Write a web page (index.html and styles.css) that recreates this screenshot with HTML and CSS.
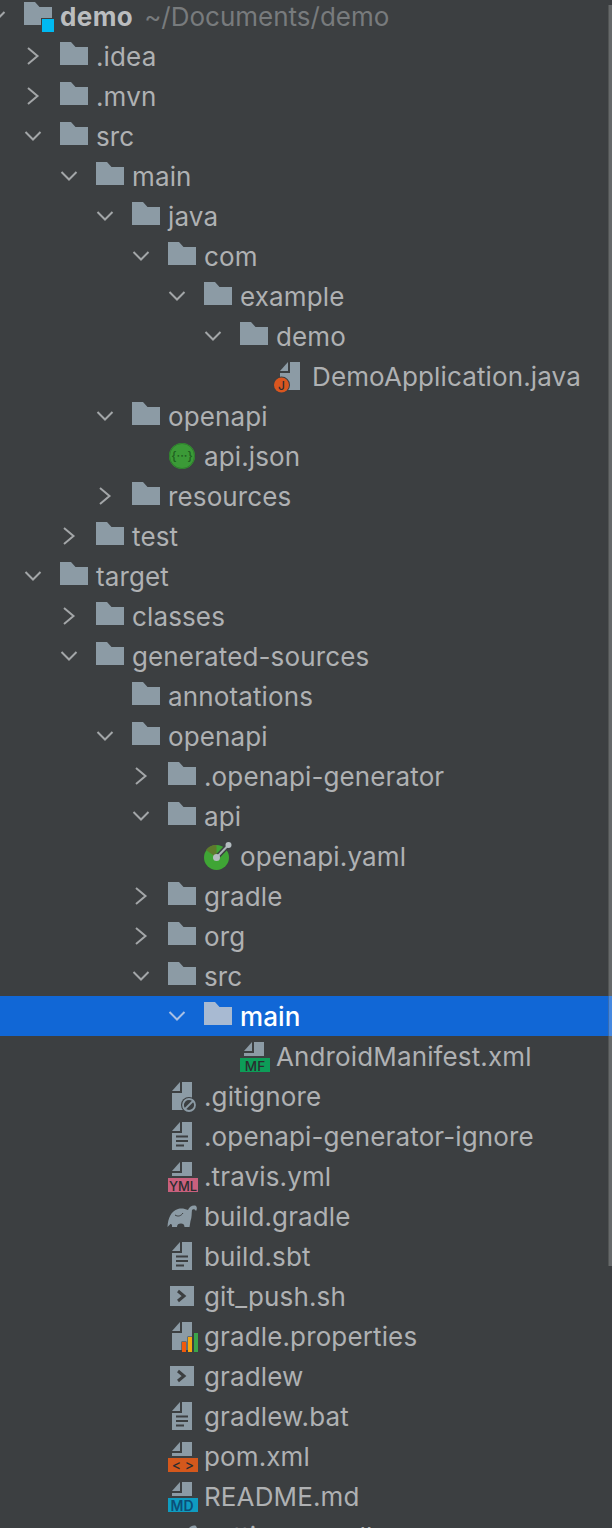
FILE: index.html
```html
<!DOCTYPE html>
<html lang="en">

<head>
    <meta charset="UTF-8">
    <meta name="viewport" content="width=device-width, initial-scale=1.0">
    <link rel="stylesheet" href="styles.css">
</head>

<body>
    <svg class="defs" width="0" height="0">
        <symbol id="folder" viewBox="0 0 28 23">
            <path d="M0 0H11L15.500 5H28V23H0Z" fill="currentColor" />
        </symbol>
        <symbol id="chevR" viewBox="0 0 22 22">
            <path d="M6 3L15.500 11L6 19" fill="none" stroke="currentColor" stroke-width="2" />
        </symbol>
        <symbol id="chevD" viewBox="0 0 22 22">
            <path d="M3.500 7L11 14.500L18.500 7" fill="none" stroke="currentColor" stroke-width="2" />
        </symbol>
        <symbol id="file" viewBox="0 0 32 32">
            <path d="M6 11H14V2Z" />
            <path d="M16 2H26V30H6V13H16Z" />
        </symbol>
        <symbol id="text" viewBox="0 0 32 32">
            <path d="M6 11H14V2Z" />
            <path d="M16 2H26V30H6V13H16Z" />
            <path d="M10 16.500H22M10 21H22M10 25.500H18" stroke="#3c3f41" stroke-width="2" />
        </symbol>
        <symbol id="stub" viewBox="0 0 32 32">
            <path d="M6 11H14V2Z" />
            <path d="M16 2H26V16H6V13H16Z" />
        </symbol>
        <symbol id="shell" viewBox="0 0 32 32">
            <path d="M4 6H28V26H4Z" />
            <path d="M12 11L18 16L12 21" fill="none" stroke="#3c3f41" stroke-width="3" />
        </symbol>
        <symbol id="gradle" viewBox="0 0 32 32">
            <path d="M1.500 27C2 18 5 11 12 9C16 8 19 9 22 10C23 7 26 5 29 5.500C31 6 31.500 9 30 11C29 9 27 8.500 26 10C25.500 13 26 17 24.500 21L23.500 27H18.500C18.500 24.500 17 23.500 15 23.500C12.500 23.500 11 24.500 11 27H6C6.500 24.500 5 23.500 4 24.500Z" />
            <path d="M9 15C12 17 15 16 17 13" fill="none" stroke="#3c3f41" stroke-width="1" />
        </symbol>
    </svg>

    <ul class="tree">
        <li class="row d0 root">
            <svg class="chev"><use href="#chevD" /></svg>
            <span class="slot">
                <svg class="folder" width="28" height="23"><use href="#folder" /></svg>
                <i class="moduleBadge"></i>
            </span>
            <span class="name">demo</span>
            <span class="path">~/Documents/demo</span>
        </li>
        <li class="row d1">
            <svg class="chev"><use href="#chevR" /></svg>
            <span class="slot"><svg class="folder" width="28" height="23"><use href="#folder" /></svg></span>
            <span class="name">.idea</span>
        </li>
        <li class="row d1">
            <svg class="chev"><use href="#chevR" /></svg>
            <span class="slot"><svg class="folder" width="28" height="23"><use href="#folder" /></svg></span>
            <span class="name">.mvn</span>
        </li>
        <li class="row d1">
            <svg class="chev"><use href="#chevD" /></svg>
            <span class="slot"><svg class="folder" width="28" height="23"><use href="#folder" /></svg></span>
            <span class="name">src</span>
        </li>
        <li class="row d2">
            <svg class="chev"><use href="#chevD" /></svg>
            <span class="slot"><svg class="folder" width="28" height="23"><use href="#folder" /></svg></span>
            <span class="name">main</span>
        </li>
        <li class="row d3">
            <svg class="chev"><use href="#chevD" /></svg>
            <span class="slot"><svg class="folder" width="28" height="23"><use href="#folder" /></svg></span>
            <span class="name">java</span>
        </li>
        <li class="row d4">
            <svg class="chev"><use href="#chevD" /></svg>
            <span class="slot"><svg class="folder" width="28" height="23"><use href="#folder" /></svg></span>
            <span class="name">com</span>
        </li>
        <li class="row d5">
            <svg class="chev"><use href="#chevD" /></svg>
            <span class="slot"><svg class="folder" width="28" height="23"><use href="#folder" /></svg></span>
            <span class="name">example</span>
        </li>
        <li class="row d6">
            <svg class="chev"><use href="#chevD" /></svg>
            <span class="slot"><svg class="folder" width="28" height="23"><use href="#folder" /></svg></span>
            <span class="name">demo</span>
        </li>
        <li class="row d7">
            <span class="slot">
                <svg class="icon" viewBox="0 0 32 32">
                    <use href="#file" />
                    <circle cx="7.500" cy="25" r="8.500" fill="#3c3f41" />
                    <circle cx="7.500" cy="25" r="7.500" fill="#d9561f" />
                    <text class="mark" x="7.500" y="29.500" font-size="12">J</text>
                </svg>
            </span>
            <span class="name">DemoApplication.java</span>
        </li>
        <li class="row d3">
            <svg class="chev"><use href="#chevD" /></svg>
            <span class="slot"><svg class="folder" width="28" height="23"><use href="#folder" /></svg></span>
            <span class="name">openapi</span>
        </li>
        <li class="row d4">
            <span class="slot">
                <svg class="icon" viewBox="0 0 32 32">
                    <circle cx="16" cy="16" r="13" fill="#3b9a37" />
                    <circle cx="16" cy="16" r="12.500" fill="none" stroke="#2d7d2c" stroke-width="1" />
                    <text class="mark jsonMark" x="16" y="20" font-size="12">{···}</text>
                </svg>
            </span>
            <span class="name">api.json</span>
        </li>
        <li class="row d3">
            <svg class="chev"><use href="#chevR" /></svg>
            <span class="slot"><svg class="folder" width="28" height="23"><use href="#folder" /></svg></span>
            <span class="name">resources</span>
        </li>
        <li class="row d2">
            <svg class="chev"><use href="#chevR" /></svg>
            <span class="slot"><svg class="folder" width="28" height="23"><use href="#folder" /></svg></span>
            <span class="name">test</span>
        </li>
        <li class="row d1">
            <svg class="chev"><use href="#chevD" /></svg>
            <span class="slot"><svg class="folder" width="28" height="23"><use href="#folder" /></svg></span>
            <span class="name">target</span>
        </li>
        <li class="row d2">
            <svg class="chev"><use href="#chevR" /></svg>
            <span class="slot"><svg class="folder" width="28" height="23"><use href="#folder" /></svg></span>
            <span class="name">classes</span>
        </li>
        <li class="row d2">
            <svg class="chev"><use href="#chevD" /></svg>
            <span class="slot"><svg class="folder" width="28" height="23"><use href="#folder" /></svg></span>
            <span class="name">generated-sources</span>
        </li>
        <li class="row d3">
            <span class="slot"><svg class="folder" width="28" height="23"><use href="#folder" /></svg></span>
            <span class="name">annotations</span>
        </li>
        <li class="row d3">
            <svg class="chev"><use href="#chevD" /></svg>
            <span class="slot"><svg class="folder" width="28" height="23"><use href="#folder" /></svg></span>
            <span class="name">openapi</span>
        </li>
        <li class="row d4">
            <svg class="chev"><use href="#chevR" /></svg>
            <span class="slot"><svg class="folder" width="28" height="23"><use href="#folder" /></svg></span>
            <span class="name">.openapi-generator</span>
        </li>
        <li class="row d4">
            <svg class="chev"><use href="#chevD" /></svg>
            <span class="slot"><svg class="folder" width="28" height="23"><use href="#folder" /></svg></span>
            <span class="name">api</span>
        </li>
        <li class="row d5">
            <span class="slot">
                <svg class="icon" viewBox="0 0 32 32">
                    <circle cx="14.500" cy="17.500" r="12.500" fill="#3fa535" />
                    <path d="M14.500 17.500L4 10A12.500 12.500 0 0 1 14.500 5Z" fill="#5e7a2c" />
                    <path d="M14.500 17.500L26 5.500" stroke="#3c3f41" stroke-width="5" />
                    <path d="M14.500 17.500L26 5.500" stroke="#a9b1b5" stroke-width="2" />
                    <circle cx="14.500" cy="17.500" r="3.500" fill="#b4bcc0" />
                    <circle cx="26.500" cy="5" r="3" fill="#b4bcc0" />
                </svg>
            </span>
            <span class="name">openapi.yaml</span>
        </li>
        <li class="row d4">
            <svg class="chev"><use href="#chevR" /></svg>
            <span class="slot"><svg class="folder" width="28" height="23"><use href="#folder" /></svg></span>
            <span class="name">gradle</span>
        </li>
        <li class="row d4">
            <svg class="chev"><use href="#chevR" /></svg>
            <span class="slot"><svg class="folder" width="28" height="23"><use href="#folder" /></svg></span>
            <span class="name">org</span>
        </li>
        <li class="row d4">
            <svg class="chev"><use href="#chevD" /></svg>
            <span class="slot"><svg class="folder" width="28" height="23"><use href="#folder" /></svg></span>
            <span class="name">src</span>
        </li>
        <li class="row d5 selected">
            <svg class="chev"><use href="#chevD" /></svg>
            <span class="slot"><svg class="folder" width="28" height="23"><use href="#folder" /></svg></span>
            <span class="name">main</span>
        </li>
        <li class="row d6">
            <span class="slot">
                <svg class="icon" viewBox="0 0 32 32">
                    <use href="#stub" />
                    <rect x="2" y="18" width="30" height="14" fill="#0d9d58" />
                    <text class="mark" x="17" y="30.500" font-size="13.500">MF</text>
                </svg>
            </span>
            <span class="name">AndroidManifest.xml</span>
        </li>
        <li class="row d4">
            <span class="slot">
                <svg class="icon" viewBox="0 0 32 32">
                    <use href="#file" />
                    <circle cx="23" cy="25" r="8" fill="#3c3f41" />
                    <circle cx="23" cy="25" r="6" fill="none" stroke="#8c9ba5" stroke-width="1.800" />
                    <path d="M19 29L27 21" stroke="#8c9ba5" stroke-width="1.800" />
                </svg>
            </span>
            <span class="name">.gitignore</span>
        </li>
        <li class="row d4">
            <span class="slot"><svg class="icon"><use href="#text" /></svg></span>
            <span class="name">.openapi-generator-ignore</span>
        </li>
        <li class="row d4">
            <span class="slot">
                <svg class="icon" viewBox="0 0 32 32">
                    <use href="#stub" />
                    <rect x="2" y="18" width="30" height="14" fill="#c9607d" />
                    <text class="mark" x="17" y="30.500" font-size="13" textLength="28">YML</text>
                </svg>
            </span>
            <span class="name">.travis.yml</span>
        </li>
        <li class="row d4">
            <span class="slot"><svg class="icon"><use href="#gradle" /></svg></span>
            <span class="name">build.gradle</span>
        </li>
        <li class="row d4">
            <span class="slot"><svg class="icon"><use href="#text" /></svg></span>
            <span class="name">build.sbt</span>
        </li>
        <li class="row d4">
            <span class="slot"><svg class="icon"><use href="#shell" /></svg></span>
            <span class="name">git_push.sh</span>
        </li>
        <li class="row d4">
            <span class="slot">
                <svg class="icon" viewBox="0 0 32 32">
                    <use href="#file" />
                    <g class="bars">
                        <rect x="16" y="22" width="4" height="10" fill="#f1590c" />
                        <rect x="22" y="17" width="4" height="15" fill="#f7a60f" />
                        <rect x="28" y="13" width="4" height="19" fill="#3aa54a" />
                    </g>
                </svg>
            </span>
            <span class="name">gradle.properties</span>
        </li>
        <li class="row d4">
            <span class="slot"><svg class="icon"><use href="#shell" /></svg></span>
            <span class="name">gradlew</span>
        </li>
        <li class="row d4">
            <span class="slot"><svg class="icon"><use href="#text" /></svg></span>
            <span class="name">gradlew.bat</span>
        </li>
        <li class="row d4">
            <span class="slot">
                <svg class="icon" viewBox="0 0 32 32">
                    <use href="#stub" />
                    <rect x="2" y="18" width="30" height="14" fill="#d4581c" />
                    <text class="mark" x="17" y="30" font-size="14">&lt; &gt;</text>
                </svg>
            </span>
            <span class="name">pom.xml</span>
        </li>
        <li class="row d4">
            <span class="slot">
                <svg class="icon" viewBox="0 0 32 32">
                    <use href="#stub" />
                    <rect x="2" y="18" width="30" height="14" fill="#0f9cc0" />
                    <text class="mark mdMark" x="16" y="30.500" font-size="14">MD</text>
                </svg>
            </span>
            <span class="name">README.md</span>
        </li>
        <li class="row d4">
            <span class="slot"><svg class="icon"><use href="#gradle" /></svg></span>
            <span class="name">settings.gradle</span>
        </li>
    </ul>

    <div class="scrollbar"></div>
</body>

</html>
```
FILE: styles.css
```css
* {
    box-sizing: border-box;
}

html,
body {
    height: 100%;
    overflow: hidden;
}

body {
    margin: 0;
    position: relative;
    background: #3c3f41;
    color: #afb1b3;
    font-family: "Inter", "Liberation Sans", sans-serif;
    font-size: 26px;
    letter-spacing: 0.13px;
}

.defs {
    position: absolute;
}

.tree {
    list-style: none;
    margin: -4px 0 0;
    padding: 0;
}

.row {
    display: flex;
    align-items: center;
    height: 40px;
    white-space: nowrap;
}

.d0 { padding-left: 24px; }
.d1 { padding-left: 60px; }
.d2 { padding-left: 96px; }
.d3 { padding-left: 132px; }
.d4 { padding-left: 168px; }
.d5 { padding-left: 204px; }
.d6 { padding-left: 240px; }
.d7 { padding-left: 276px; }

.chev {
    flex: none;
    width: 22px;
    height: 22px;
    margin: 0 16px 0 -38px;
    color: #a3a6a8;
}

.slot {
    position: relative;
    flex: none;
    display: flex;
    align-items: center;
    width: 28px;
    height: 40px;
    margin-right: 8px;
    color: #8c9ba5;
}

.folder {
    margin-top: -5px;
}

.icon {
    flex: none;
    width: 32px;
    height: 32px;
    margin-left: -2px;
    fill: #8c9ba5;
    overflow: visible;
}

.mark {
    font-family: "Inter", "Liberation Sans", sans-serif;
    font-weight: 500;
    letter-spacing: 0;
    fill: #2b2d2f;
    text-anchor: middle;
}

.jsonMark {
    fill: #1f5e1f;
}

.mdMark {
    fill: #0b4f78;
    font-weight: 600;
}

.bars rect {
    stroke: #3c3f41;
    stroke-width: 1;
    paint-order: stroke;
}

.root .name {
    font-weight: 700;
    letter-spacing: 0.4px;
    color: #bbbdbf;
}

.path {
    margin-left: 11px;
    letter-spacing: 0;
    color: #787b7d;
}

.moduleBadge {
    position: absolute;
    left: 18px;
    top: 23px;
    width: 12px;
    height: 13px;
    background: #00b9f1;
    outline: 1px solid #3c3f41;
}

.selected {
    background: #1167d6;
}

.selected .name {
    color: #fff;
    font-weight: 500;
}

.selected .chev {
    color: #a9c0e4;
}

.selected .slot {
    color: #a8bad2;
}

.scrollbar {
    position: absolute;
    top: 5px;
    right: 0;
    width: 4px;
    height: 1261px;
    border-left: 1px solid rgba(0, 0, 0, 0.2);
    background: rgba(255, 255, 255, 0.22);
}
```
